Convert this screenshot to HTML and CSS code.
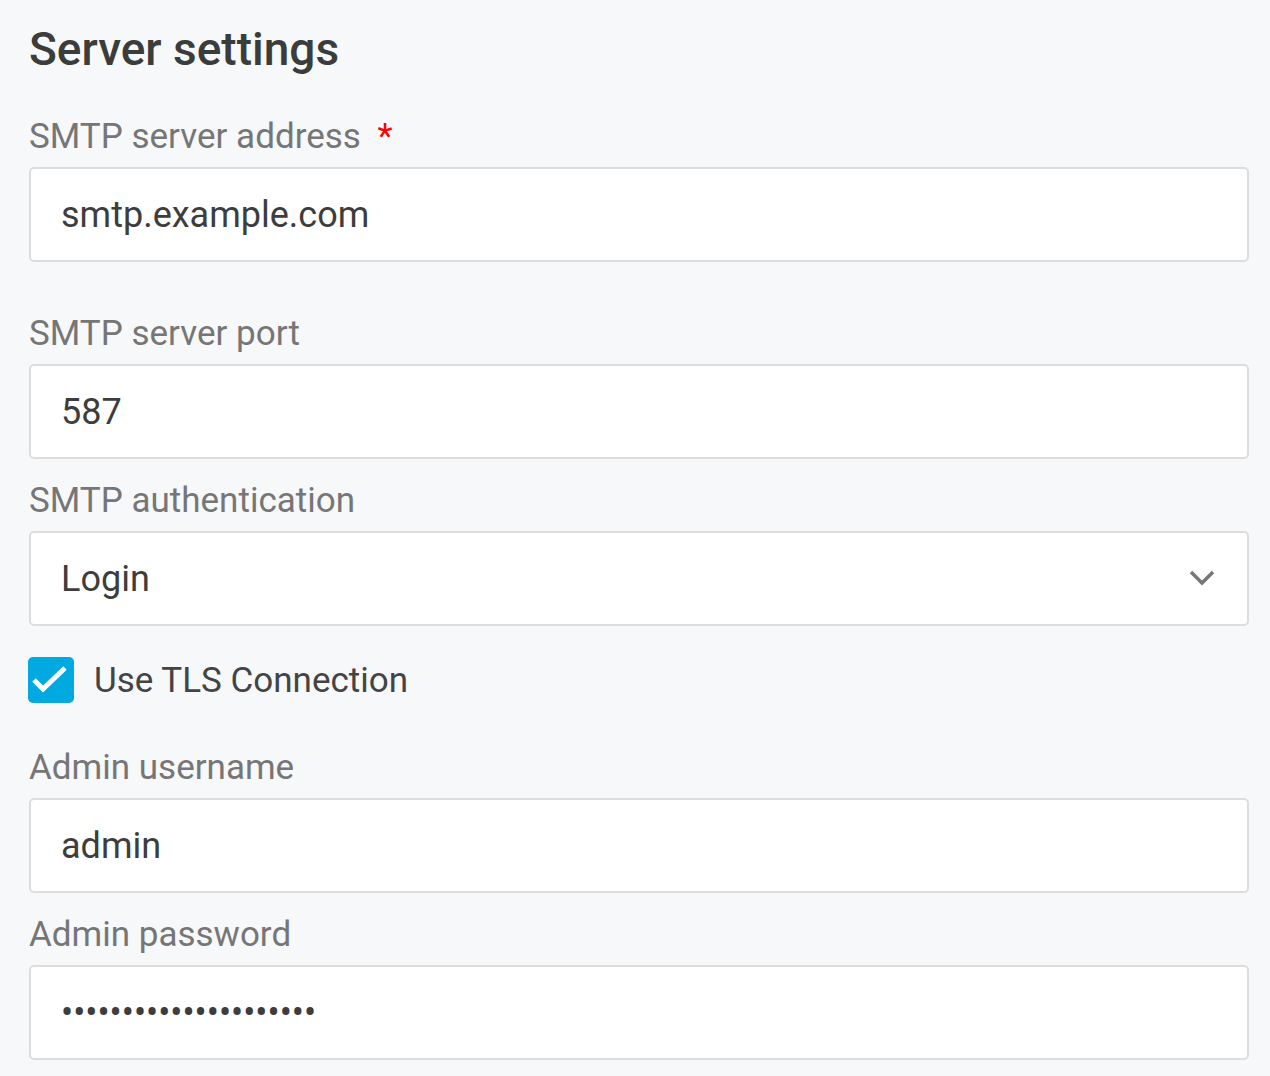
FILE: index.html
```html
<!DOCTYPE html>
<html lang="en">
<head>
  <meta charset="UTF-8">
  <title>Server settings</title>
  <link rel="stylesheet" href="styles.css">
</head>
<body>
  <div class="settings">
    <h2>Server settings</h2>

    <!-- SMTP -->
    <div class="field field-first">
      <label class="label" for="host">SMTP server address <span class="req">*</span></label>
      <input class="input" id="host" type="text" value="smtp.example.com">
    </div>

    <div class="field">
      <label class="label" for="port">SMTP server port</label>
      <input class="input" id="port" type="text" value="587">
    </div>

    <div class="field">
      <label class="label" for="auth">SMTP authentication</label>
      <div class="select-wrap">
        <select class="input select" id="auth">
          <option>Login</option>
          <option>Plain</option>
          <option>None</option>
        </select>
        <svg class="chevron" width="26" height="18" viewBox="0 0 26 18">
          <polyline points="2,3 13,14 24,3" fill="none" stroke="#777" stroke-width="3.5"/>
        </svg>
      </div>
    </div>

    <label class="check">
      <span class="box">
        <svg width="46" height="46" viewBox="0 0 46 46">
          <polyline points="6,23 15,32 37,11" fill="none" stroke="#fff" stroke-width="5"/>
        </svg>
      </span>
      Use TLS Connection
    </label>

    <!-- Admin -->
    <div class="field">
      <label class="label" for="user">Admin username</label>
      <input class="input" id="user" type="text" value="admin">
    </div>

    <div class="field">
      <label class="label" for="pass">Admin password</label>
      <input class="input" id="pass" type="password" value="secretpassword1234567">
    </div>
  </div>
</body>
</html>
```

FILE: styles.css
```css
body {
  margin: 0;
  background-color: #f7f8fa;
  font-family: Roboto, "Liberation Sans", sans-serif;
}
.settings {
  padding: 0 21px 0 29px;
}
h2 {
  margin: 0 0 18px;
  padding-top: 21px;
  font-size: 46px;
  line-height: 56px;
  font-weight: 500;
  color: #3b3c3c;
}
.field {
  padding-top: 22px;
}
.field-first {
  padding-bottom: 30px;
}
.label {
  display: block;
  font-size: 35px;
  line-height: 40px;
  margin-bottom: 10px;
  color: #767676;
}
.req {
  color: #f00;
  margin-left: 8px;
}
.input {
  display: block;
  box-sizing: border-box;
  width: 100%;
  height: 95px;
  margin: 0;
  padding: 0 30px;
  border: 2px solid #dddddd;
  border-radius: 5px;
  background-color: #fff;
  font-family: inherit;
  font-size: 36px;
  color: #3d3d3d;
  outline: none;
}
.select {
  appearance: none;
  -webkit-appearance: none;
}
.select-wrap {
  position: relative;
}
.chevron {
  position: absolute;
  right: 34px;
  top: 38px;
  pointer-events: none;
}
.check {
  display: flex;
  align-items: center;
  gap: 20px;
  margin-top: 31px;
  margin-bottom: 23px;
  margin-left: -1px;
  font-size: 35px;
  color: #444;
}
.box {
  width: 46px;
  height: 46px;
  border-radius: 5px;
  background-color: #00a9e0;
}
.box svg {
  display: block;
}
```
